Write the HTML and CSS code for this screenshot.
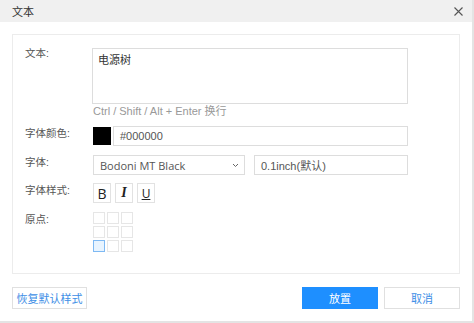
FILE: index.html
```html
<!DOCTYPE html>
<html lang="zh">
<head>
<meta charset="utf-8">
<link rel="stylesheet" href="styles.css">
</head>
<body>
<div class="dialog">
  <div class="header">
    <span class="title">文本</span>
    <svg class="close" width="9" height="9" viewBox="0 0 9 9"><path d="M0.5 0.5L8.5 8.5M8.5 0.5L0.5 8.5" stroke="#555" stroke-width="1.1"/></svg>
  </div>
  <div class="body">
    <div class="panel">
      <div class="row row-text">
        <div class="label label-text">文本:</div>
        <div class="ctrl">
          <div class="textarea">电源树</div>
          <div class="hint">Ctrl / Shift / Alt + Enter 换行</div>
        </div>
      </div>
      <div class="row row-color">
        <div class="label">字体颜色:</div>
        <div class="ctrl color-ctrl">
          <div class="swatch"></div>
          <div class="input color-input">#000000</div>
        </div>
      </div>
      <div class="row row-font">
        <div class="label">字体:</div>
        <div class="ctrl font-ctrl">
          <div class="input select">
            <span>Bodoni MT Black</span>
            <svg width="7" height="5" viewBox="0 0 7 5"><path d="M1 1L3.5 3.5L6 1" fill="none" stroke="#666" stroke-width="1"/></svg>
          </div>
          <div class="input size-input">0.1inch(默认)</div>
        </div>
      </div>
      <div class="row row-style">
        <div class="label">字体样式:</div>
        <div class="ctrl style-ctrl">
          <div class="sbtn b">B</div>
          <div class="sbtn i">I</div>
          <div class="sbtn u">U</div>
        </div>
      </div>
      <div class="row row-origin">
        <div class="label">原点:</div>
        <div class="ctrl grid">
          <div class="cell"></div><div class="cell"></div><div class="cell"></div>
          <div class="cell"></div><div class="cell"></div><div class="cell"></div>
          <div class="cell on"></div><div class="cell"></div><div class="cell"></div>
        </div>
      </div>
    </div>
  </div>
  <div class="footer">
    <div class="btn reset">恢复默认样式</div>
    <div class="spacer"></div>
    <div class="btn primary">放置</div>
    <div class="btn cancel">取消</div>
  </div>
</div>
</body>
</html>
```

FILE: styles.css
```css
* { box-sizing: border-box; }
html, body { margin: 0; padding: 0; background: #fff; }
body {
  font-family: "Liberation Sans", "Noto Sans CJK SC", sans-serif;
  font-size: 11px;
  color: #333;
}
.dialog {
  width: 474px;
  height: 323px;
  border-right: 2px solid #e4e4e4;
  border-bottom: 2px solid #e4e4e4;
  display: flex;
  flex-direction: column;
}
.header {
  height: 22px;
  background: #f0f0f0;
  display: flex;
  align-items: center;
  justify-content: space-between;
  padding: 0 9px 0 12px;
}
.title { font-size: 11px; color: #333; }
.body { padding: 12px 12px 0 12px; }
.panel {
  border: 1px solid #ececec;
  height: 240px;
  padding: 13px 51px 0 12px;
}
.row { display: flex; align-items: flex-start; }
.label {
  width: 67px;
  flex: none;
  line-height: 14px;
  color: #555;
  font-size: 10.5px;
}
.label-text { margin-top: -2px; }
.ctrl { flex: 1; }
.textarea {
  height: 56px;
  border: 1px solid #ddd;
  padding: 4px 5px;
  line-height: 14px;
  color: #333;
}
.hint {
  color: #999;
  margin-top: 1px;
  line-height: 13px;
  padding-left: 1px;
}
.row-color { margin-top: 8px; }
.color-ctrl { display: flex; align-items: center; gap: 2px; padding-left: 1px; }
.swatch { width: 18px; height: 18px; background: #000; flex: none; }
.input {
  height: 20px;
  border: 1px solid #ddd;
  display: flex;
  align-items: center;
  padding: 0 6px;
  color: #555;
}
.color-input { flex: 1; }
.row-font { margin-top: 9px; }
.font-ctrl { display: flex; gap: 9px; padding-left: 1px; }
.select { width: 152px; justify-content: space-between; padding-right: 5px; font-family: "Open Sans", "Noto Sans CJK SC", sans-serif; font-size: 11px; }
.size-input { flex: 1; }
.row-style { margin-top: 8px; }
.style-ctrl { display: flex; gap: 4px; padding-left: 1px; }
.sbtn {
  width: 18px;
  height: 20px;
  border: 1px solid #e2e2e2;
  display: flex;
  align-items: center;
  justify-content: center;
  font-size: 14px;
  color: #222;
}
.sbtn.b { font-family: "Open Sans", sans-serif; font-size: 14px; }
.sbtn.i { font-style: italic; font-weight: bold; font-family: "Liberation Serif", serif; }
.sbtn.u { text-decoration: underline; font-family: "Open Sans", sans-serif; font-size: 12px; }
.row-origin { margin-top: 9px; }
.grid {
  flex: none;
  display: grid;
  grid-template-columns: repeat(3, 12px);
  grid-auto-rows: 12px;
  gap: 2px;
  margin-left: 1px;
}
.cell { border: 1px solid #e6e6e6; }
.cell.on { border-color: #7eb9f3; background: #e8f4ff; }
.footer {
  display: flex;
  padding: 13px 12px 0 12px;
  gap: 6px;
}
.spacer { flex: 1; }
.btn {
  height: 22px;
  border: 1px solid #e0e0e0;
  display: flex;
  align-items: center;
  justify-content: center;
  color: #3d8ee6;
}
.reset { width: 75px; }
.primary { width: 76px; background: #1e8fff; border-color: #1e8fff; color: #fff; }
.cancel { width: 76px; }
```
